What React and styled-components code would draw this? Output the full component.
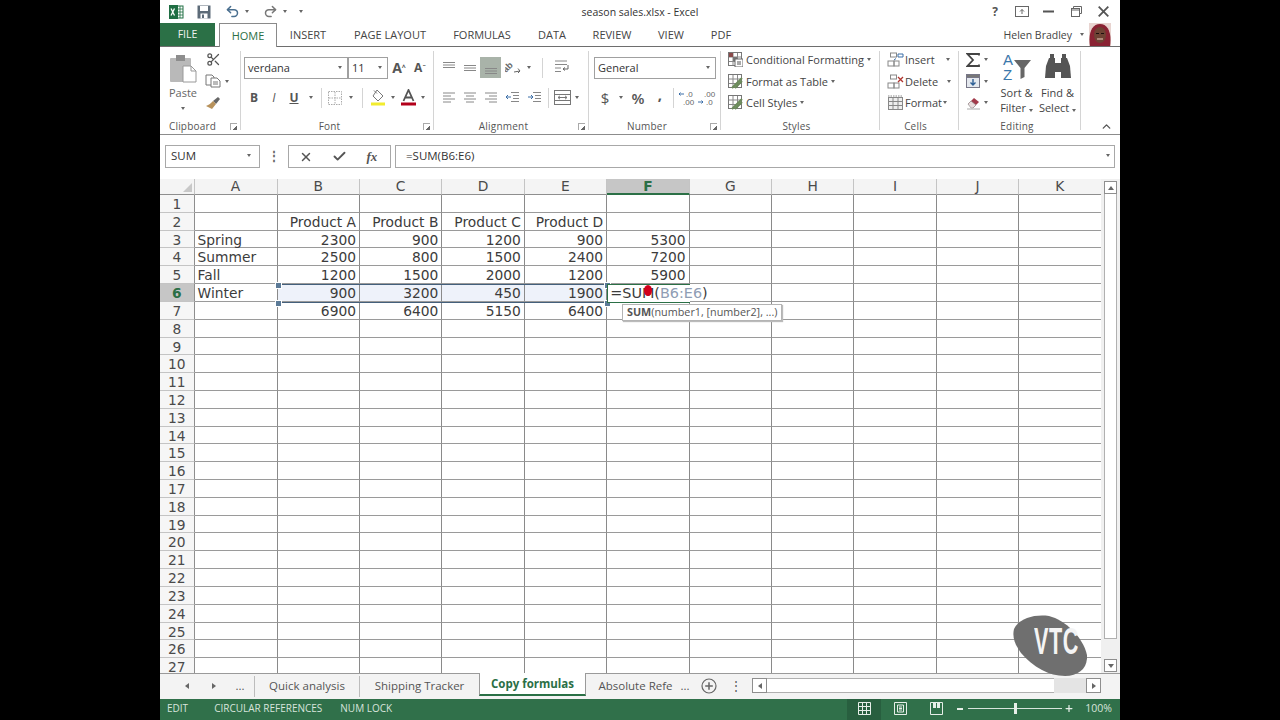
import styled, { createGlobalStyle } from "styled-components";
import { Scissors, Undo2, Redo2, X, Check, ChevronUp, Plus } from "lucide-react";

const UI_FONT = `"Open Sans", "Noto Sans", "Liberation Sans", sans-serif`;
const CELL_FONT = `"DejaVu Sans", Verdana, sans-serif`;

const COLUMNS = ["A", "B", "C", "D", "E", "F", "G", "H", "I", "J", "K"];

const SHEET = {
  2: { B: "Product A", C: "Product B", D: "Product C", E: "Product D" },
  3: { A: "Spring", B: 2300, C: 900, D: 1200, E: 900, F: 5300 },
  4: { A: "Summer", B: 2500, C: 800, D: 1500, E: 2400, F: 7200 },
  5: { A: "Fall", B: 1200, C: 1500, D: 2000, E: 1200, F: 5900 },
  6: { A: "Winter", B: 900, C: 3200, D: 450, E: 1900 },
  7: { B: 6900, C: 6400, D: 5150, E: 6400 },
};

const GlobalStyle = createGlobalStyle`
  html, body {
    margin: 0;
    background: #000;
    width: 1280px;
    height: 720px;
    overflow: hidden;
  }
`;

const Screen = styled.div`
  position: relative;
  width: 960px;
  height: 720px;
  margin-left: 160px;
  background: #fff;
  display: flex;
  flex-direction: column;
  font-family: ${UI_FONT};
  color: #444;
  overflow: hidden;
`;

const TitleBar = styled.div`
  height: 23px;
  display: flex;
  align-items: center;
  position: relative;
  flex: none;
`;

const Slot = styled.div`
  width: ${(p) => p.$w}px;
  margin-left: ${(p) => p.$ml || 0}px;
  display: flex;
  align-items: center;
  justify-content: center;
  flex: none;
`;

const Title = styled.div`
  position: absolute;
  left: 0;
  right: 0;
  top: 4px;
  text-align: center;
  font-size: 10.5px;
  line-height: 16px;
  color: #333;
`;

const WindowButtons = styled.div`
  margin-left: auto;
  display: flex;
  align-items: center;
  padding-right: 2px;
`;

const Help = styled.span`
  font-weight: 700;
  font-size: 12px;
  color: #555;
`;

const TabRow = styled.div`
  height: 24px;
  flex: none;
  display: flex;
  align-items: stretch;
  border-bottom: 1px solid #6e6e6e;
  box-sizing: border-box;
  font-size: 11px;
`;

const FileTab = styled.div`
  width: 55px;
  background: #2b7046;
  color: #f2f2f2;
  display: flex;
  align-items: center;
  justify-content: center;
  font-size: 10.5px;
  padding-bottom: 1px;
  box-sizing: border-box;
`;

const RibbonTab = styled.div`
  width: ${(p) => p.$w}px;
  margin-left: ${(p) => p.$ml || 0}px;
  display: flex;
  align-items: center;
  justify-content: center;
  color: #444;
  white-space: nowrap;
  padding-bottom: 1px;
  ${(p) =>
    p.$active &&
    `
    color: #2b6f46;
    background: #fff;
    border: 1px solid #8a8a8a;
    border-bottom: 0;
    margin-bottom: -1px;
    box-sizing: border-box;
  `}
`;

const Account = styled.div`
  margin-left: auto;
  display: flex;
  align-items: center;
  padding-right: 9px;
  color: #444;
  font-size: 10.5px;
`;

const Ribbon = styled.div`
  height: 87px;
  flex: none;
  display: flex;
  border-bottom: 1px solid #8c8c8c;
  position: relative;
`;

const Group = styled.div`
  width: ${(p) => p.$w}px;
  flex: none;
  display: flex;
  flex-direction: column;
  padding-top: ${(p) => p.$pt ?? 10}px;
  box-sizing: border-box;
  padding-left: ${(p) => p.$pl || 0}px;
  position: relative;
  &::after {
    content: "";
    position: absolute;
    right: 0;
    top: 4px;
    bottom: 4px;
    width: 1px;
    background: #d4d4d4;
  }
`;

const GroupBody = styled.div`
  height: ${(p) => p.$h || 62}px;
  display: ${(p) => (p.$row ? "flex" : "block")};
`;

const GroupLabel = styled.div`
  height: 14px;
  line-height: 14px;
  font-size: 10px;
  letter-spacing: 0.2px;
  color: #555;
  text-align: center;
  margin-right: ${(p) => p.$mr || 0}px;
`;

const Launcher = styled.div`
  position: absolute;
  right: 4px;
  bottom: 4px;
  width: 7px;
  height: 7px;
  border-left: 1px solid #aaa;
  border-top: 1px solid #aaa;
  box-sizing: border-box;
  &::after {
    content: "";
    position: absolute;
    right: 0;
    bottom: 0;
    width: 4px;
    height: 4px;
    background: linear-gradient(135deg, transparent 50%, #666 50%);
  }
`;

const ToolRow = styled.div`
  display: flex;
  align-items: center;
  height: 21px;
  margin-bottom: ${(p) => p.$mb || 0}px;
`;

const Tool = styled.div`
  width: ${(p) => p.$w || 20}px;
  height: 21px;
  flex: none;
  box-sizing: border-box;
  padding-bottom: ${(p) => p.$lift || 0}px;
  display: flex;
  align-items: center;
  justify-content: center;
  background: ${(p) => (p.$on ? "#a9b3a9" : "transparent")};
  color: #555;
  font-size: ${(p) => p.$size || 12}px;
  font-weight: ${(p) => p.$weight || 400};
  font-style: ${(p) => (p.$italic ? "italic" : "normal")};
  text-decoration: ${(p) => (p.$under ? "underline" : "none")};
`;

const Divider = styled.div`
  width: 1px;
  height: 20px;
  flex: none;
  margin: 0 ${(p) => p.$m || 5}px;
  background: #d4d4d4;
`;

const Caret = styled.span`
  display: inline-block;
  width: 0;
  height: 0;
  border-left: 2.5px solid transparent;
  border-right: 2.5px solid transparent;
  border-top: 3px solid ${(p) => p.$color || "#666"};
  flex: none;
`;

const ComboBox = styled.div`
  width: ${(p) => p.$w}px;
  height: 22px;
  flex: none;
  border: 1px solid #a0a0a0;
  box-sizing: border-box;
  display: flex;
  align-items: center;
  justify-content: space-between;
  padding: 0 5px 0 3px;
  font-size: 11px;
  color: #333;
`;

const ClipLayout = styled.div`
  display: flex;
`;

const PasteColumn = styled.div`
  width: 44px;
  margin-left: 1px;
  padding-top: 5px;
  flex: none;
  display: flex;
  flex-direction: column;
  align-items: center;
  font-size: 11px;
  line-height: 14px;
  color: #666;
`;

const PasteText = styled.span`
  margin-top: 3px;
`;

const PasteCaret = styled.div`
  margin-top: 6px;
  line-height: 0;
`;

const SmallColumn = styled.div`
  display: flex;
  flex-direction: column;
  width: 30px;
`;

const StackRow = styled.div`
  display: flex;
  align-items: center;
  height: 21.5px;
  font-size: 11px;
  color: #444;
  white-space: nowrap;
  gap: ${(p) => p.$gap ?? 3}px;
`;

const LargeAction = styled.div`
  width: 41px;
  display: flex;
  flex-direction: column;
  align-items: center;
  font-size: 11px;
  line-height: 14.5px;
  color: #444;
  white-space: nowrap;
`;

const LargeIcon = styled.div`
  height: 36px;
  display: flex;
  align-items: center;
  margin-bottom: 1px;
`;

const Collapse = styled.div`
  position: absolute;
  right: 7px;
  bottom: 1px;
  color: #555;
  line-height: 0;
`;

const FormulaBar = styled.div`
  margin-top: 10px;
  height: 23px;
  flex: none;
  display: flex;
  align-items: stretch;
  padding: 0 5px;
  font-size: 11.5px;
  color: #333;
`;

const NameBox = styled.div`
  width: 95px;
  box-sizing: border-box;
  border: 1px solid #a8a8a8;
  display: flex;
  align-items: center;
  justify-content: space-between;
  padding: 0 8px 2px 5px;
  flex: none;
`;

const BarGrip = styled.div`
  width: 28px;
  flex: none;
  text-align: center;
  line-height: 21px;
  font-weight: 700;
  color: #666;
`;

const BarButtons = styled.div`
  width: 103px;
  flex: none;
  box-sizing: border-box;
  border: 1px solid #a8a8a8;
  display: flex;
  align-items: center;
  justify-content: space-around;
  padding: 0 3px 0 0;
  color: #555;
`;

const FunctionMark = styled.span`
  font-family: "Liberation Serif", serif;
  font-style: italic;
  font-size: 13px;
  font-weight: 700;
  color: #555;
`;

const FormulaInput = styled.div`
  flex: 1;
  margin-left: 4px;
  box-sizing: border-box;
  border: 1px solid #a8a8a8;
  display: flex;
  align-items: center;
  justify-content: space-between;
  padding: 0 4px 2px 10px;
`;

const SheetArea = styled.div`
  margin-top: 11px;
  height: 494px;
  flex: none;
  display: flex;
  overflow: hidden;
`;

const Sheet = styled.div`
  position: relative;
  width: 941px;
  flex: none;
  display: grid;
  grid-template-columns: 34.6px 83px repeat(10, 82.4px);
  grid-template-rows: 16px;
  grid-auto-rows: 17.82px;
  font-family: ${CELL_FONT};
  font-size: 13.8px;
  color: #3c3c3c;
  overflow: hidden;
`;

const Corner = styled.div`
  background: #f4f4f4;
  border-right: 1px solid #c4c4c4;
  border-bottom: 1px solid #8e8e8e;
  box-sizing: border-box;
  position: relative;
  &::after {
    content: "";
    position: absolute;
    right: 2px;
    bottom: 2px;
    border-left: 9px solid transparent;
    border-bottom: 9px solid #c8c8c8;
  }
`;

const ColumnHead = styled.div`
  box-sizing: border-box;
  text-align: center;
  line-height: 15px;
  border-right: 1px solid #c4c4c4;
  border-bottom: ${(p) => (p.$active ? "2px solid #2b7046" : "1px solid #8e8e8e")};
  background: ${(p) => (p.$active ? "#c6c6c6" : "#f4f4f4")};
  color: ${(p) => (p.$active ? "#2b6f46" : "#4a4a4a")};
  font-weight: ${(p) => (p.$active ? 700 : 400)};
`;

const RowHead = styled.div`
  box-sizing: border-box;
  text-align: center;
  line-height: 18.5px;
  border-right: 1px solid #8e8e8e;
  border-bottom: 1px solid #c4c4c4;
  background: ${(p) => (p.$active ? "#c6c6c6" : "#f6f6f6")};
  color: ${(p) => (p.$active ? "#2b6f46" : "#4a4a4a")};
  font-weight: ${(p) => (p.$active ? 700 : 400)};
`;

const Cell = styled.div`
  box-sizing: border-box;
  border-right: 1px solid #8a8a8a;
  border-bottom: 1px solid #9a9a9a;
  line-height: 18.5px;
  padding: 0 3px 0 3px;
  white-space: nowrap;
  text-align: ${(p) => (p.$number ? "right" : "left")};
  background: ${(p) => (p.$selected ? "#eef2fa" : "transparent")};
`;

const RangeBorder = styled.div`
  position: absolute;
  left: 117.6px;
  top: 105.1px;
  width: 330px;
  height: 18.8px;
  box-sizing: border-box;
  border-top: 1.5px solid #44607c;
  border-bottom: 1.5px solid #44607c;
  pointer-events: none;
`;

const RangeHandle = styled.div`
  position: absolute;
  width: 5px;
  height: 5px;
  background: #5b7a97;
  border: 1px solid #fff;
  left: ${(p) => p.$x}px;
  top: ${(p) => p.$y}px;
`;

const ActiveCell = styled.div`
  position: absolute;
  left: 447.2px;
  top: 105px;
  width: 83px;
  height: 19px;
  box-sizing: border-box;
  border-top: 1.5px solid #2b7046;
  border-bottom: 1.5px solid #2b7046;
  border-left: 1.5px solid #2b7046;
  background: #fff;
  line-height: 17px;
  padding-left: 2px;
  white-space: nowrap;
  overflow: visible;
  color: #3c3c3c;
  font-size: 14.4px;
`;

const RangeRef = styled.span`
  color: #8f9db4;
`;

const Laser = styled.div`
  position: absolute;
  left: 484px;
  top: 106px;
  width: 8px;
  height: 11px;
  border-radius: 50%;
  background: #d2001c;
`;

const ArgTip = styled.div`
  position: absolute;
  left: 462px;
  top: 125px;
  height: 15px;
  padding: 0 4px;
  background: #fff;
  border: 1px solid #b4b4b4;
  box-shadow: 1px 1px 1px #bbb;
  font-family: ${UI_FONT};
  font-size: 10.8px;
  line-height: 14px;
  color: #555;
  white-space: nowrap;
`;

const VerticalScroll = styled.div`
  width: 19px;
  flex: none;
  background: #f0f0f0;
  display: flex;
  flex-direction: column;
  align-items: center;
  padding-top: 2px;
  box-sizing: border-box;
`;

const ScrollButton = styled.div`
  width: ${(p) => p.$w || 13}px;
  height: ${(p) => p.$h || 13}px;
  flex: none;
  box-sizing: border-box;
  background: #fff;
  border: 1px solid #8e8e8e;
  display: flex;
  align-items: center;
  justify-content: center;
`;

const VerticalThumb = styled.div`
  width: 13px;
  height: 445px;
  flex: none;
  background: #fff;
  border: 1px solid #b0b0b0;
  border-top: 0;
  box-sizing: border-box;
`;

const ScrollSpacer = styled.div`
  flex: 1;
`;

const DownButton = styled(ScrollButton)`
  margin-bottom: 1px;
`;

const Triangle = styled.span`
  width: 0;
  height: 0;
  ${(p) =>
    ({
      up: "border-left: 3px solid transparent; border-right: 3px solid transparent; border-bottom: 4px solid #666;",
      down: "border-left: 3px solid transparent; border-right: 3px solid transparent; border-top: 4px solid #666;",
      left: "border-top: 3px solid transparent; border-bottom: 3px solid transparent; border-right: 4px solid #666;",
      right: "border-top: 3px solid transparent; border-bottom: 3px solid transparent; border-left: 4px solid #666;",
    })[p.$dir]}
`;

const TabStrip = styled.div`
  height: 26px;
  flex: none;
  background: #f3f3f3;
  border-top: 1px solid #9a9a9a;
  box-sizing: border-box;
  display: flex;
  align-items: stretch;
  font-size: 11.5px;
  color: #555;
`;

const SheetNav = styled.div`
  width: ${(p) => p.$w}px;
  margin-left: ${(p) => p.$ml || 0}px;
  padding-bottom: 2px;
  flex: none;
  display: flex;
  align-items: center;
  justify-content: center;
`;

const SheetTab = styled.div`
  width: ${(p) => p.$w}px;
  flex: none;
  display: flex;
  align-items: center;
  justify-content: center;
  white-space: nowrap;
  box-sizing: border-box;
  padding-bottom: ${(p) => (p.$active ? 0 : 3)}px;
  border-left: ${(p) => (p.$sep ? "1px solid #bcbcbc" : "0")};
  margin: ${(p) => (p.$sep ? "2px 0" : "0")};
  ${(p) =>
    p.$active &&
    `
    background: #fff;
    color: #2b6f46;
    font-weight: 700;
    margin-top: -1px;
    margin-bottom: 3px;
    border-left: 1px solid #9a9a9a;
    border-right: 1px solid #9a9a9a;
    border-bottom: 2px solid #2b7046;
  `}
`;

const SheetScroll = styled.div`
  width: 349px;
  margin-left: 9px;
  height: 15px;
  align-self: center;
  margin-bottom: 2px;
  display: flex;
  background: #e4e4e4;
`;

const HorizontalThumb = styled.div`
  width: 287px;
  background: #fff;
  border-top: 1px solid #b0b0b0;
  border-bottom: 1px solid #b0b0b0;
  box-sizing: border-box;
`;

const PushRight = styled.div`
  margin-left: auto;
`;

const StatusBar = styled.div`
  flex: 1;
  background: #30704a;
  color: #d8e4dc;
  display: flex;
  align-items: center;
  font-size: 10px;
`;

const StatusItem = styled.span`
  margin-left: ${(p) => p.$ml}px;
  margin-bottom: 3px;
  white-space: nowrap;
`;

const StatusView = styled.div`
  width: ${(p) => p.$w || 36}px;
  margin-left: ${(p) => p.$ml || 0}px;
  height: 100%;
  padding-bottom: 2px;
  box-sizing: border-box;
  flex: none;
  display: flex;
  align-items: center;
  justify-content: center;
  background: ${(p) => (p.$on ? "#285f3f" : "transparent")};
`;

const ZoomMinus = styled.span`
  width: 6px;
  height: 2px;
  margin-bottom: 2px;
  background: #e6eee8;
`;

const ZoomSlider = styled.div`
  width: 94px;
  height: 1px;
  margin: 0 2px 2px 3px;
  background: #d8e4dc;
  position: relative;
  flex: none;
`;

const ZoomThumb = styled.div`
  position: absolute;
  left: 46px;
  top: -5px;
  width: 3px;
  height: 11px;
  background: #e8efe9;
`;

const ZoomPlus = styled(Slot)`
  margin-bottom: 2px;
`;

const ZoomText = styled.span`
  margin-left: 11px;
  margin-right: 8px;
  margin-bottom: 3px;
  font-size: 10.5px;
`;

const Watermark = styled.div`
  position: absolute;
  left: 853px;
  top: 615px;
  width: 74px;
  height: 62px;
`;

const WatermarkText = styled.span`
  position: absolute;
  left: 21px;
  top: 9px;
  font-family: "Liberation Sans", sans-serif;
  font-weight: 700;
  font-size: 36px;
  line-height: 36px;
  color: #f4f4f4;
  transform: scaleX(0.6);
  transform-origin: left center;
  letter-spacing: 1px;
`;

const Avatar = () => (
  <svg width="22" height="23" viewBox="0 0 22 23">
    <rect width="22" height="23" fill="#e8d4d0" />
    <path d="M1 23 C-1 10 3 1 11 1 C19 1 23 10 21 23Z" fill="#8a2233" />
    <ellipse cx="11" cy="12" rx="6" ry="8" fill="#6e4234" />
    <path d="M7 10.5h3M12 10.5h3" stroke="#1c0e0e" strokeWidth="1.2" />
    <path d="M8 16h6" stroke="#d8b8a8" strokeWidth="1.2" />
  </svg>
);

const ExcelLogo = () => (
  <svg width="16" height="16" viewBox="0 0 16 16">
    <rect x="6" y="2" width="9" height="12" fill="#fff" stroke="#1f6e43" />
    <path d="M9 2v12M12 2v12M6 5h9M6 8h9M6 11h9" stroke="#1f6e43" strokeWidth=".8" />
    <rect x="1" y="1" width="9" height="14" fill="#1f6e43" />
    <path d="M3 4.5l3.5 7M6.5 4.5l-3.5 7" stroke="#fff" strokeWidth="1.3" />
  </svg>
);

const SaveIcon = () => (
  <svg width="14" height="14" viewBox="0 0 14 14">
    <path d="M.5.5h13v13H.5z" fill="#5d6b78" />
    <rect x="3" y="1" width="8" height="5" fill="#fff" />
    <rect x="3.5" y="8.5" width="7" height="5" fill="#fff" />
    <rect x="5" y="9.5" width="2" height="3.5" fill="#5d6b78" />
  </svg>
);

const RibbonDisplayIcon = () => (
  <svg width="14" height="11" viewBox="0 0 14 11" fill="none" stroke="#666">
    <rect x=".5" y=".5" width="13" height="10" />
    <path d="M7 8V3.5M5 5.5L7 3.5l2 2" />
  </svg>
);

const MinimizeIcon = () => (
  <svg width="11" height="3" viewBox="0 0 11 3">
    <rect width="11" height="2" y=".5" fill="#555" />
  </svg>
);

const RestoreIcon = () => (
  <svg width="11" height="11" viewBox="0 0 11 11" fill="none" stroke="#666">
    <path d="M2.5 2.5v-2h8v7h-2" />
    <rect x=".5" y="2.5" width="8" height="8" />
    <path d="M.5 4h8" />
  </svg>
);

const CloseIcon = () => (
  <svg width="11" height="11" viewBox="0 0 11 11" stroke="#555" strokeWidth="1.8">
    <path d="M.7.7l9.6 9.6M10.3.7L.7 10.3" />
  </svg>
);

const PasteIcon = () => (
  <svg width="28" height="29" viewBox="0 0 28 29">
    <rect x="1" y="4" width="21" height="24" rx="1" fill="#b9b9b9" />
    <rect x="7" y="1" width="9" height="6" fill="#8d8d8d" />
    <path d="M14 12h8l5 5v11H14z" fill="#fff" stroke="#999" />
    <path d="M22 12v5h5" fill="none" stroke="#999" />
  </svg>
);

const CopyIcon = () => (
  <svg width="16" height="14" viewBox="0 0 16 14" fill="#fff" stroke="#777">
    <path d="M1 1h6l2 2v8H1z" />
    <path d="M6 4h6l3 3v6H6z" />
    <path d="M8 8h5M8 10h5" fill="none" />
  </svg>
);

const BrushIcon = () => (
  <svg width="16" height="14" viewBox="0 0 16 14">
    <path d="M8 5l5-4 2 2-4 5z" fill="#666" />
    <path d="M8 5l3 3-4 5-6-3c3-1 5-3 7-5z" fill="#b8925c" />
  </svg>
);

const BordersIcon = () => (
  <svg width="14" height="14" viewBox="0 0 14 14" fill="none" stroke="#aaa" strokeDasharray="1.5 1">
    <rect x=".5" y=".5" width="13" height="13" />
    <path d="M7 1v12M1 7h12" />
  </svg>
);

const FillIcon = () => (
  <svg width="16" height="17" viewBox="0 0 16 17">
    <path d="M7 1l6 6-5 5-5-5z" fill="#fff" stroke="#777" />
    <path d="M4 1.5l3 3" stroke="#777" />
    <rect x="1" y="13.5" width="14" height="3" fill="#f2ec2e" />
  </svg>
);

const FontColorIcon = () => (
  <svg width="15" height="17" viewBox="0 0 15 17">
    <path d="M2.5 12L7.5 1l5 11M4.5 8.5h6" fill="none" stroke="#555" strokeWidth="1.8" />
    <rect x="0" y="13.5" width="15" height="3" fill="#b3001a" />
  </svg>
);

const LinesIcon = ({ mode }) => {
  const rows = {
    top: [1.5, 4, 6.5],
    middle: [4.5, 7, 9.5],
    bottom: [7.5, 10, 12.5],
    left: [2, 5, 8, 11],
    center: [2, 5, 8, 11],
    right: [2, 5, 8, 11],
  }[mode];
  const horizontal = (i) => {
    const short = i % 2 === 1;
    if (mode === "left") return [1, short ? 9 : 13];
    if (mode === "right") return [short ? 5 : 1, 13];
    if (mode === "center") return [short ? 3 : 1, short ? 11 : 13];
    return [1, 13];
  };
  return (
    <svg width="14" height="14" viewBox="0 0 14 14" stroke="#888">
      {rows.map((y, i) => {
        const [a, b] = horizontal(i);
        return <path key={y} d={`M${a} ${y}H${b}`} />;
      })}
    </svg>
  );
};

const OrientIcon = () => (
  <svg width="17" height="15" viewBox="0 0 17 15">
    <text
      x="1"
      y="13"
      fontSize="9"
      fontWeight="700"
      fontFamily="Liberation Sans"
      fill="#666"
      transform="rotate(-45 1 13)"
    >
      ab
    </text>
    <path d="M9 12l6-1M13 8.5l2 2.5-2 2" fill="none" stroke="#666" />
  </svg>
);

const WrapIcon = () => (
  <svg width="16" height="15" viewBox="0 0 16 15" fill="none" stroke="#888">
    <path d="M1 1h12M1 4.5h12M1 8h6M1 11.5h6" />
    <path d="M14 5v4h-5M11 7.5L9 9l2 1.5" stroke="#666" />
  </svg>
);

const IndentIcon = ({ increase }) => (
  <svg width="15" height="13" viewBox="0 0 15 13" fill="none" stroke="#888">
    <path d="M6 1.5h8M8 4.5h6M8 7.5h6M6 10.5h8" />
    <path
      d={increase ? "M1 6h5M4 4l2 2-2 2" : "M6 6H1M3 4L1 6l2 2"}
      stroke="#3b6ea8"
    />
  </svg>
);

const MergeIcon = () => (
  <svg width="17" height="15" viewBox="0 0 17 15" fill="none" stroke="#777">
    <rect x=".5" y=".5" width="16" height="14" />
    <path d="M1 4.5h15M1 10.5h15M4 7.5h9M11 5.8l2 1.7-2 1.7M6 5.8L4 7.5l2 1.7" />
  </svg>
);

const DecimalIcon = ({ increase }) => (
  <svg width="19" height="16" viewBox="0 0 19 16">
    <text x={increase ? 8 : 6} y="7" fontSize="8" fontFamily="Liberation Sans" fill="#666">
      {increase ? ".0" : ".00"}
    </text>
    <text x={increase ? 5 : 8} y="15" fontSize="8" fontFamily="Liberation Sans" fill="#666">
      {increase ? ".00" : ".0"}
    </text>
    <path
      d={increase ? "M6 4H1M2.5 2.5L1 4l1.5 1.5" : "M0 12h5M3.5 10.5L5 12l-1.5 1.5"}
      stroke="#3b6ea8"
      fill="none"
    />
  </svg>
);

const StyleIcon = ({ variant }) => (
  <svg width="15" height="15" viewBox="0 0 15 15">
    <rect x=".5" y=".5" width="13" height="13" fill="#fff" stroke="#777" />
    <path d="M5 1v12M9.5 1v12M1 5h12M1 9.5h12" stroke="#888" />
    {variant === "conditional" && (
      <>
        <rect x="1" y="1" width="4" height="4" fill="#8a4a4a" />
        <rect x="5" y="5" width="4" height="4" fill="#777" />
        <rect x="7" y="7" width="8" height="8" fill="#fff" stroke="#666" />
        <path d="M9 10h4M9 12h4" stroke="#555" />
      </>
    )}
    {variant !== "conditional" && (
      <path d="M4 14L14 4M7 14l7-7" stroke="#6b8a5a" strokeWidth="2" />
    )}
  </svg>
);

const CellsIcon = ({ variant }) => (
  <svg width="17" height="15" viewBox="0 0 17 15" fill="none" stroke="#888">
    {variant === "format" ? (
      <>
        <rect x="1.5" y="2.5" width="14" height="12" fill="#eee" />
        <path d="M6 3v11M11 3v11M2 6.5h13M2 10.5h13" />
        <path d="M1 1h15" strokeDasharray="1.5 1" />
      </>
    ) : (
      <>
        <rect x="3.5" y="1" width="6" height="4" />
        <rect x="1" y="9" width="6" height="5" />
        <rect x="7" y="9" width="5" height="5" />
        {variant === "insert" ? (
          <path d="M11 5h5V2h-5zM9 6.5L7 8" stroke="#3b6ea8" />
        ) : (
          <path d="M11 3l5 5M16 3l-5 5" stroke="#b0352f" strokeWidth="1.3" />
        )}
      </>
    )}
  </svg>
);

const SigmaIcon = () => (
  <svg width="14" height="14" viewBox="0 0 14 14" fill="none" stroke="#444" strokeWidth="1.8">
    <path d="M13 2.5V1H1.5l5.5 6-5.5 6H13v-1.5" />
  </svg>
);

const FillDownIcon = () => (
  <svg width="14" height="14" viewBox="0 0 14 14" fill="#e4e8ee" stroke="#778">
    <rect x=".5" y=".5" width="13" height="13" />
    <rect x=".5" y=".5" width="13" height="3" fill="#777" />
    <path d="M7 5v6M4.5 8.5L7 11l2.5-2.5" fill="none" stroke="#2e5f95" strokeWidth="1.4" />
  </svg>
);

const EraserIcon = () => (
  <svg width="16" height="14" viewBox="0 0 16 14">
    <path d="M2 8l6-6 5 4-6 6z" fill="#a23a4a" />
    <path d="M2 8l3-3 5 4-3 3H5z" fill="#e8dcdc" stroke="#888" strokeWidth=".6" />
    <path d="M1 13h13" stroke="#aaa" />
  </svg>
);

const SortIcon = () => (
  <svg width="30" height="30" viewBox="0 0 30 30">
    <text x="1" y="13" fontSize="15" fontFamily="Liberation Sans" fill="#3b78ab">A</text>
    <text x="1" y="28" fontSize="15" fontFamily="Liberation Sans" fill="#3b78ab">Z</text>
    <path d="M12 8h17l-6.5 8v9l-4 2V16z" fill="#666" />
  </svg>
);

const BinocularsIcon = () => (
  <svg width="28" height="26" viewBox="0 0 28 26" fill="#555">
    <path d="M2 12l3-8h6v20H1z" />
    <path d="M26 12l-3-8h-6v20h10z" />
    <rect x="6" y="0" width="4" height="5" />
    <rect x="18" y="0" width="4" height="5" />
    <rect x="11" y="9" width="6" height="9" />
  </svg>
);

const AddSheetIcon = () => (
  <svg width="16" height="16" viewBox="0 0 16 16" fill="none" stroke="#666" strokeWidth="1.2">
    <circle cx="8" cy="8" r="7" />
    <path d="M8 4.2v7.6M4.2 8h7.6" strokeWidth="1.5" />
  </svg>
);

const NormalViewIcon = () => (
  <svg width="13" height="13" viewBox="0 0 13 13" fill="none" stroke="#e6eee8">
    <path d="M.5.5h12v12H.5zM4.5 1v11M8.5 1v11M1 4.5h11M1 8.5h11" />
  </svg>
);

const LayoutViewIcon = () => (
  <svg width="13" height="13" viewBox="0 0 13 13" fill="none" stroke="#e6eee8">
    <path d="M.5.5h12v12H.5z" />
    <path d="M3.5 3h6v7h-6zM5 5h3M5 6.5h3M5 8h3" />
  </svg>
);

const BreakViewIcon = () => (
  <svg width="13" height="13" viewBox="0 0 13 13">
    <path d="M.5.5h12v12H.5z" fill="none" stroke="#e6eee8" />
    <path d="M3 1h3v5H3zM7 1h3v5H7z" fill="#e6eee8" />
  </svg>
);

const WatermarkShape = () => (
  <svg width="74" height="62" viewBox="0 0 74 62">
    <path
      d="M1 14C6 3 22-1 36 1C52 5 70 22 74 40C75 53 66 61 52 61C36 61 20 52 8 38C2 30-1 22 1 14Z"
      fill="#6f6f6f"
    />
  </svg>
);

const Cells = () =>
  Array.from({ length: 27 }, (_, index) => {
    const row = index + 1;
    const values = SHEET[row] || {};
    return [
      <RowHead key={`h${row}`} $active={row === 6}>
        {row}
      </RowHead>,
      ...COLUMNS.map((col) => {
        const value = values[col];
        const inRange = row === 6 && "BCDE".includes(col);
        return (
          <Cell
            key={`${col}${row}`}
            $number={typeof value === "number" || row === 2}
            $selected={inRange}
          >
            {value}
          </Cell>
        );
      }),
    ];
  });

export default function App() {
  return (
    <>
      <GlobalStyle />
      <Screen>
        <TitleBar>
          <Slot $w={16} $ml={8}><ExcelLogo /></Slot>
          <Slot $w={14} $ml={13}><SaveIcon /></Slot>
          <Slot $w={18} $ml={12}><Undo2 size={15} color="#4a6f8f" strokeWidth={2.4} /></Slot>
          <Slot $w={8} $ml={2}><Caret /></Slot>
          <Slot $w={18} $ml={10}><Redo2 size={15} color="#777" strokeWidth={2.4} /></Slot>
          <Slot $w={8} $ml={2}><Caret /></Slot>
          <Slot $w={8} $ml={8}><Caret /></Slot>
          <Title>season sales.xlsx - Excel</Title>
          <WindowButtons>
            <Slot $w={14}><Help>?</Help></Slot>
            <Slot $w={14} $ml={13}><RibbonDisplayIcon /></Slot>
            <Slot $w={11} $ml={14}><MinimizeIcon /></Slot>
            <Slot $w={11} $ml={17}><RestoreIcon /></Slot>
            <Slot $w={11} $ml={16}><CloseIcon /></Slot>
            <Slot $w={9} />
          </WindowButtons>
        </TitleBar>

        <TabRow>
          <FileTab>FILE</FileTab>
          <RibbonTab $active $w={58} $ml={4}>HOME</RibbonTab>
          <RibbonTab $w={36} $ml={13}>INSERT</RibbonTab>
          <RibbonTab $w={74} $ml={27}>PAGE LAYOUT</RibbonTab>
          <RibbonTab $w={60} $ml={25}>FORMULAS</RibbonTab>
          <RibbonTab $w={30} $ml={25}>DATA</RibbonTab>
          <RibbonTab $w={40} $ml={25}>REVIEW</RibbonTab>
          <RibbonTab $w={30} $ml={24}>VIEW</RibbonTab>
          <RibbonTab $w={24} $ml={23}>PDF</RibbonTab>
          <Account>
            Helen Bradley
            <Slot $w={8} $ml={6}><Caret /></Slot>
            <Slot $w={22} $ml={3}><Avatar /></Slot>
          </Account>
        </TabRow>

        <Ribbon>
          <Group $w={81} $pt={2}>
            <GroupBody $h={70}>
              <ClipLayout>
                <PasteColumn>
                  <PasteIcon />
                  <PasteText>Paste</PasteText>
                  <PasteCaret><Caret /></PasteCaret>
                </PasteColumn>
                <SmallColumn>
                  <StackRow><Slot $w={16}><Scissors size={15} color="#555" /></Slot></StackRow>
                  <StackRow $gap={4}><Slot $w={16}><CopyIcon /></Slot><Caret /></StackRow>
                  <StackRow><Slot $w={16}><BrushIcon /></Slot></StackRow>
                </SmallColumn>
              </ClipLayout>
            </GroupBody>
            <GroupLabel $mr={16}>Clipboard</GroupLabel>
            <Launcher />
          </Group>

          <Group $w={193} $pl={3}>
            <GroupBody>
              <ToolRow $mb={9}>
                <ComboBox $w={104}>verdana<Caret /></ComboBox>
                <ComboBox $w={40}>11<Caret /></ComboBox>
                <Tool $w={22} $size={14} $weight={700}>A<sup style={{ fontSize: 7 }}>^</sup></Tool>
                <Tool $w={20} $size={12} $weight={700}>A<sup style={{ fontSize: 7 }}>ˇ</sup></Tool>
              </ToolRow>
              <ToolRow>
                <Tool $w={20} $weight={700}>B</Tool>
                <Tool $w={20} $italic>I</Tool>
                <Tool $w={20} $under $weight={700}>U</Tool>
                <Slot $w={14}><Caret /></Slot>
                <Divider $m={3} />
                <Tool $w={20}><BordersIcon /></Tool>
                <Slot $w={12}><Caret /></Slot>
                <Divider $m={5} />
                <Tool $w={20}><FillIcon /></Tool>
                <Slot $w={10}><Caret /></Slot>
                <Tool $w={20}><FontColorIcon /></Tool>
                <Slot $w={10}><Caret /></Slot>
              </ToolRow>
            </GroupBody>
            <GroupLabel $mr={19}>Font</GroupLabel>
            <Launcher />
          </Group>

          <Group $w={155} $pl={5}>
            <GroupBody>
              <ToolRow $mb={9}>
                <Tool><LinesIcon mode="top" /></Tool>
                <Tool $w={21}><LinesIcon mode="middle" /></Tool>
                <Tool $w={21} $on><LinesIcon mode="bottom" /></Tool>
                <Tool $w={24}><OrientIcon /></Tool>
                <Slot $w={8}><Caret /></Slot>
                <Divider $m={9} />
                <Tool $w={20}><WrapIcon /></Tool>
              </ToolRow>
              <ToolRow>
                <Tool><LinesIcon mode="left" /></Tool>
                <Tool $w={21}><LinesIcon mode="center" /></Tool>
                <Tool $w={21}><LinesIcon mode="right" /></Tool>
                <Tool $w={22}><IndentIcon /></Tool>
                <Tool $w={22}><IndentIcon increase /></Tool>
                <Divider $m={3} />
                <Tool $w={20}><MergeIcon /></Tool>
                <Slot $w={10}><Caret /></Slot>
              </ToolRow>
            </GroupBody>
            <GroupLabel $mr={21}>Alignment</GroupLabel>
            <Launcher />
          </Group>

          <Group $w={132} $pl={5}>
            <GroupBody>
              <ToolRow $mb={9}>
                <ComboBox $w={122}>General<Caret /></ComboBox>
              </ToolRow>
              <ToolRow>
                <Tool $w={22} $size={15}>$</Tool>
                <Slot $w={10}><Caret /></Slot>
                <Tool $w={24} $size={15} $weight={600}>%</Tool>
                <Tool $w={20} $size={15} $weight={700} $lift={7}>,</Tool>
                <Divider $m={3} />
                <Tool $w={20}><DecimalIcon increase /></Tool>
                <Tool $w={20}><DecimalIcon /></Tool>
              </ToolRow>
            </GroupBody>
            <GroupLabel $mr={21}>Number</GroupLabel>
            <Launcher />
          </Group>

          <Group $w={159} $pl={7} $pt={2}>
            <GroupBody $h={70}>
              <StackRow><StyleIcon variant="conditional" />Conditional Formatting<Caret /></StackRow>
              <StackRow><StyleIcon />Format as Table<Caret /></StackRow>
              <StackRow><StyleIcon />Cell Styles<Caret /></StackRow>
            </GroupBody>
            <GroupLabel $mr={15}>Styles</GroupLabel>
          </Group>

          <Group $w={79} $pl={7} $pt={2}>
            <GroupBody $h={70}>
              <StackRow $gap={1}><CellsIcon variant="insert" />Insert<Slot $w={8} $ml={8}><Caret /></Slot></StackRow>
              <StackRow $gap={1}><CellsIcon variant="delete" />Delete<Slot $w={8} $ml={6}><Caret /></Slot></StackRow>
              <StackRow $gap={1}><CellsIcon variant="format" />Format<Caret /></StackRow>
            </GroupBody>
            <GroupLabel $mr={15}>Cells</GroupLabel>
          </Group>

          <Group $w={122} $pl={7} $pt={2}>
            <GroupBody $row $h={70}>
              <SmallColumn>
                <StackRow $gap={4}><SigmaIcon /><Caret /></StackRow>
                <StackRow $gap={4}><FillDownIcon /><Caret /></StackRow>
                <StackRow $gap={2}><EraserIcon /><Caret /></StackRow>
              </SmallColumn>
              <LargeAction>
                <LargeIcon><SortIcon /></LargeIcon>
                <span>Sort &amp;</span>
                <span>Filter <Caret /></span>
              </LargeAction>
              <LargeAction>
                <LargeIcon><BinocularsIcon /></LargeIcon>
                <span>Find &amp;</span>
                <span>Select <Caret /></span>
              </LargeAction>
            </GroupBody>
            <GroupLabel $mr={13}>Editing</GroupLabel>
          </Group>

          <Collapse><ChevronUp size={13} strokeWidth={2.5} /></Collapse>
        </Ribbon>

        <FormulaBar>
          <NameBox>SUM<Caret /></NameBox>
          <BarGrip>⋮</BarGrip>
          <BarButtons>
            <X size={14} strokeWidth={2.5} />
            <Check size={15} strokeWidth={3} />
            <FunctionMark>fx</FunctionMark>
          </BarButtons>
          <FormulaInput>=SUM(B6:E6)<Caret /></FormulaInput>
        </FormulaBar>

        <SheetArea>
          <Sheet>
            <Corner />
            {COLUMNS.map((col) => (
              <ColumnHead key={col} $active={col === "F"}>{col}</ColumnHead>
            ))}
            <Cells />
            <RangeBorder />
            <RangeHandle $x={115} $y={103} />
            <RangeHandle $x={115} $y={121} />
            <RangeHandle $x={444} $y={103} />
            <RangeHandle $x={444} $y={121} />
            <ActiveCell>=SUM(<RangeRef>B6:E6</RangeRef>)</ActiveCell>
            <Laser />
            <ArgTip><b>SUM</b>(number1, [number2], ...)</ArgTip>
          </Sheet>
          <VerticalScroll>
            <ScrollButton><Triangle $dir="up" /></ScrollButton>
            <VerticalThumb />
            <ScrollSpacer />
            <DownButton><Triangle $dir="down" /></DownButton>
          </VerticalScroll>
        </SheetArea>

        <TabStrip>
          <SheetNav $w={10} $ml={22}><Triangle $dir="left" /></SheetNav>
          <SheetNav $w={10} $ml={17}><Triangle $dir="right" /></SheetNav>
          <SheetNav $w={14} $ml={14}>...</SheetNav>
          <Slot $w={7} />
          <SheetTab $sep $w={105}>Quick analysis</SheetTab>
          <SheetTab $sep $w={120}>Shipping Tracker</SheetTab>
          <SheetTab $active $w={107}>Copy formulas</SheetTab>
          <Slot $w={13} />
          <SheetTab $w={73}>Absolute Refe</SheetTab>
          <SheetNav $w={14} $ml={6}>...</SheetNav>
          <SheetNav $w={16} $ml={9}><AddSheetIcon /></SheetNav>
          <SheetNav $w={14} $ml={12}>⋮</SheetNav>
          <SheetScroll>
            <ScrollButton $w={15} $h={15}><Triangle $dir="left" /></ScrollButton>
            <HorizontalThumb />
            <PushRight />
            <ScrollButton $w={15} $h={15}><Triangle $dir="right" /></ScrollButton>
          </SheetScroll>
        </TabStrip>

        <StatusBar>
          <StatusItem $ml={7}>EDIT</StatusItem>
          <StatusItem $ml={26}>CIRCULAR REFERENCES</StatusItem>
          <StatusItem $ml={18}>NUM LOCK</StatusItem>
          <PushRight />
          <StatusView $on $w={34}><NormalViewIcon /></StatusView>
          <StatusView $w={36} $ml={1}><LayoutViewIcon /></StatusView>
          <StatusView $w={36}><BreakViewIcon /></StatusView>
          <Slot $w={10} $ml={1}><ZoomMinus /></Slot>
          <ZoomSlider><ZoomThumb /></ZoomSlider>
          <ZoomPlus $w={10}><Plus size={11} strokeWidth={3} color="#e6eee8" /></ZoomPlus>
          <ZoomText>100%</ZoomText>
        </StatusBar>

        <Watermark>
          <WatermarkShape />
          <WatermarkText>VTC</WatermarkText>
        </Watermark>
      </Screen>
    </>
  );
}
